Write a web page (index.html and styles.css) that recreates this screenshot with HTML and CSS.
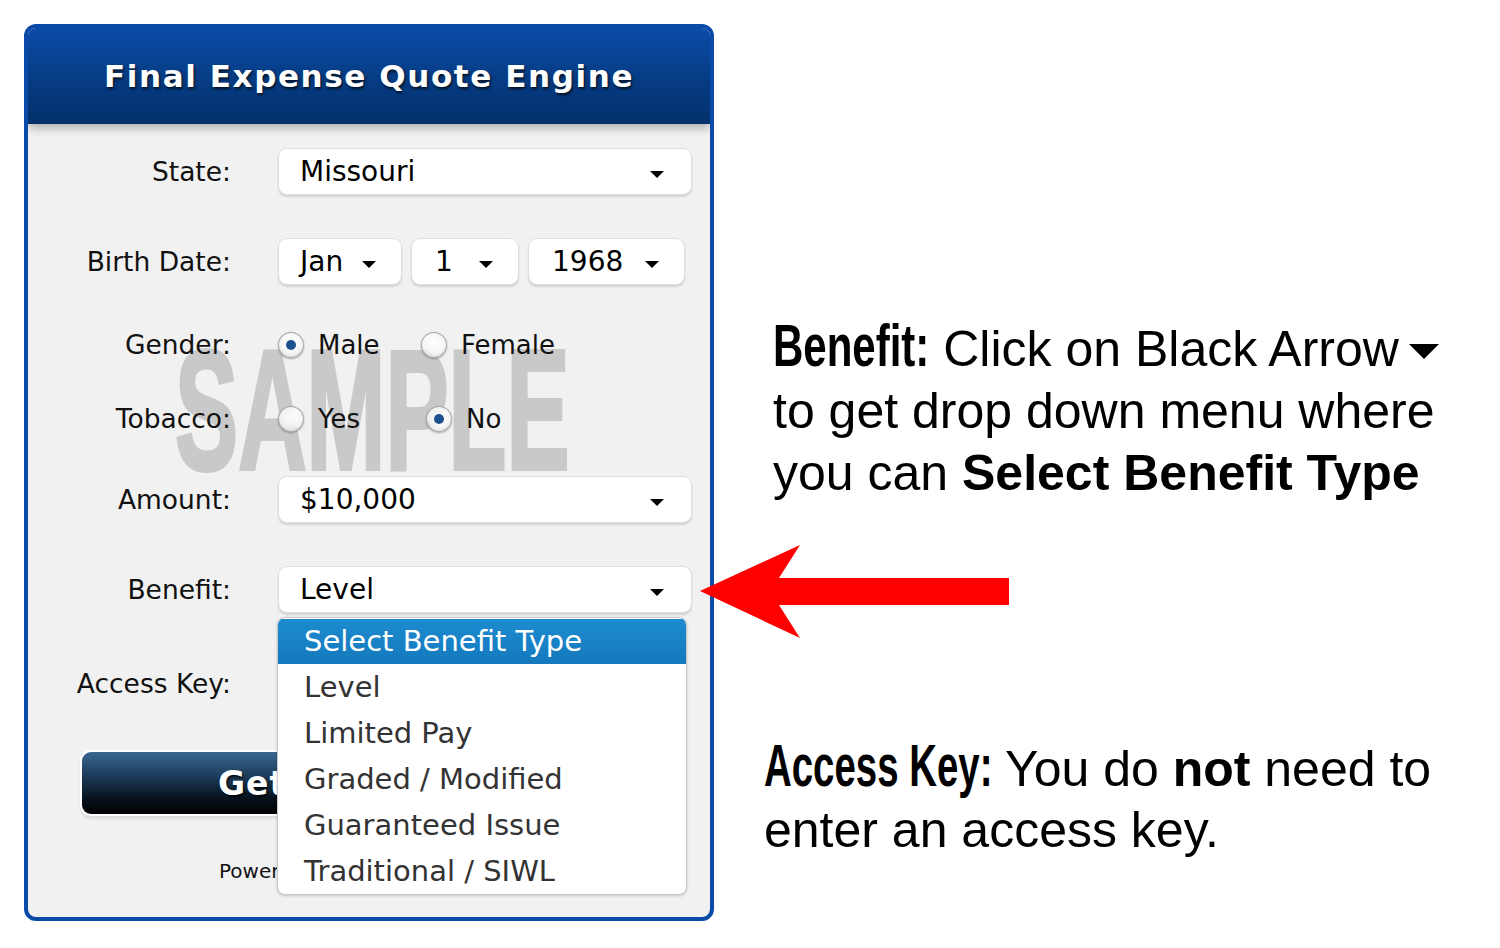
FILE: index.html
```html
<!DOCTYPE html>
<html lang="en">
<head>
<meta charset="utf-8">
<title>Final Expense Quote Engine</title>
<link rel="stylesheet" href="styles.css">
</head>
<body>
<div class="page">
  <div class="panel">
    <div class="panel-head"><h1 class="title">Final Expense Quote Engine</h1></div>
    <div class="panel-body">
      <div class="watermark">SAMPLE</div>

      <div class="row r-state">
        <div class="lbl">State:</div>
        <div class="select"><span>Missouri</span><i class="caret"></i></div>
      </div>

      <div class="row r-birth">
        <div class="lbl">Birth Date:</div>
        <div class="dates">
          <div class="select sm s-month"><span>Jan</span><i class="caret"></i></div>
          <div class="select sm s-day"><span>1</span><i class="caret"></i></div>
          <div class="select sm s-year"><span>1968</span><i class="caret"></i></div>
        </div>
      </div>

      <div class="row r-gender">
        <div class="lbl">Gender:</div>
        <div class="opts">
          <div class="opt opt-g"><span class="radio on"></span><span>Male</span></div>
          <div class="opt opt-g"><span class="radio"></span><span>Female</span></div>
        </div>
      </div>

      <div class="row r-tobacco">
        <div class="lbl">Tobacco:</div>
        <div class="opts">
          <div class="opt opt-t"><span class="radio"></span><span>Yes</span></div>
          <div class="opt opt-t"><span class="radio on"></span><span>No</span></div>
        </div>
      </div>

      <div class="row r-amount">
        <div class="lbl">Amount:</div>
        <div class="select"><span>$10,000</span><i class="caret"></i></div>
      </div>

      <div class="row r-benefit">
        <div class="lbl">Benefit:</div>
        <div class="select-wrap">
          <div class="select"><span>Level</span><i class="caret"></i></div>
          <ul class="menu">
            <li class="active">Select Benefit Type</li>
            <li>Level</li>
            <li>Limited Pay</li>
            <li>Graded / Modified</li>
            <li>Guaranteed Issue</li>
            <li>Traditional / SIWL</li>
          </ul>
        </div>
      </div>

      <div class="row r-access">
        <div class="lbl">Access Key:</div>
        <div class="input"></div>
      </div>

      <div class="btn">Get Quotes</div>

      <div class="powered">Powered by Quote Engine</div>
    </div>
  </div>

  <div class="notes">
    <p class="note n-benefit"><span class="hd hd-benefit">Benefit:</span> Click on Black Arrow<i class="tri"></i><br>to get drop down menu where<br>you can <b>Select Benefit Type</b></p>
    <p class="note n-access"><span class="hd hd-access">Access Key:</span> You do <b>not</b> need to<br>enter an access key.</p>
  </div>

  <svg class="red-arrow" width="310" height="94" viewBox="0 0 310 94" aria-hidden="true">
    <polygon points="0,46 100,0 79,33 309,33 309,60 79,60 100,93" fill="#ff0000"/>
  </svg>
</div>
</body>
</html>
```

FILE: styles.css
```css
html, body {
  margin: 0;
  padding: 0;
  background: #ffffff;
}

.page {
  position: relative;
  display: flex;
  align-items: flex-start;
  padding: 24px 0 0 24px;
  height: 924px;
}

/* ---------- panel ---------- */
.panel {
  width: 682px;
  border: 4px solid #0a4aa8;
  border-radius: 12px;
  overflow: hidden;
  background: #f1f1f1;
  font-family: "DejaVu Sans", Verdana, sans-serif;
  color: #111;
}

.panel-head {
  position: relative;
  z-index: 3;
  height: 96px;
  display: flex;
  align-items: center;
  justify-content: center;
  background: linear-gradient(#0b4ca8, #063d86 50%, #03306a);
  box-shadow: 0 4px 9px rgba(0, 0, 0, 0.28);
}

.title {
  margin: 0;
  font-size: 31px;
  font-weight: 700;
  letter-spacing: 1.6px;
  color: #ffffff;
  text-shadow: 1px 2px 3px rgba(0, 0, 0, 0.75);
}

.panel-body {
  position: relative;
  height: 769px;
  padding-top: 24px;
  display: flex;
  flex-direction: column;
}

.watermark {
  position: absolute;
  left: 147px;
  top: 201px;
  z-index: 0;
  font-family: "Liberation Sans", Arial, sans-serif;
  font-weight: 700;
  font-size: 170px;
  line-height: 1;
  color: #c9c9c9;
  -webkit-text-stroke: 4px #c9c9c9;
  transform: scaleX(0.557);
  transform-origin: 0 0;
  white-space: nowrap;
}

.row {
  position: relative;
  z-index: 1;
  display: grid;
  grid-template-columns: 203px 1fr;
  column-gap: 47px;
  align-items: center;
  height: 47px;
  padding-right: 18px;
}

.lbl {
  text-align: right;
  font-size: 26.5px;
  color: #111;
  white-space: nowrap;
}

.r-birth { margin-top: 43px; }
.r-gender { margin-top: 36px; }
.r-tobacco { margin-top: 27px; }
.r-amount { margin-top: 34px; }
.r-benefit { margin-top: 43px; z-index: 2; }
.r-access { margin-top: 47px; }

/* ---------- selects ---------- */
.select {
  box-sizing: border-box;
  height: 47px;
  display: flex;
  align-items: center;
  justify-content: space-between;
  padding: 0 27px 0 21px;
  background: #ffffff;
  border: 1px solid #dedede;
  border-radius: 9px;
  box-shadow: 0 2px 2px rgba(0, 0, 0, 0.13);
  font-size: 28px;
  color: #000;
  white-space: nowrap;
}

.caret {
  display: block;
  width: 0;
  height: 0;
  margin-top: 6px;
  border-left: 7.5px solid transparent;
  border-right: 7.5px solid transparent;
  border-top: 7px solid #000;
}

.dates {
  display: flex;
  gap: 9px;
}

.select.sm { padding-right: 25px; }
.s-month { width: 124px; }
.s-day { width: 108px; padding-left: 23px; }
.s-year { width: 157px; padding-left: 23px; }

/* ---------- radios ---------- */
.opts {
  display: flex;
  align-items: center;
}

.opt {
  display: flex;
  align-items: center;
  gap: 14px;
  font-size: 26px;
  color: #111;
}

.opt-g { width: 143px; }
.opt-t { width: 148px; }

.radio {
  position: relative;
  box-sizing: border-box;
  width: 26px;
  height: 26px;
  border-radius: 50%;
  border: 1px solid rgba(150, 150, 150, 0.8);
  background: radial-gradient(circle at 50% 40%, rgba(255,255,255,0.95) 0%, rgba(246,246,246,0.85) 55%, rgba(205,205,205,0.8) 100%);
  box-shadow: 0 1px 2px rgba(0, 0, 0, 0.3);
}

.radio.on::after {
  content: "";
  position: absolute;
  left: 7px;
  top: 7px;
  width: 10px;
  height: 10px;
  border-radius: 50%;
  background: #1d508e;
}

/* ---------- dropdown menu ---------- */
.select-wrap {
  position: relative;
}

.menu {
  position: absolute;
  left: -1px;
  top: 51px;
  z-index: 5;
  box-sizing: border-box;
  width: 410px;
  margin: 0;
  padding: 1px 0 0;
  list-style: none;
  background: #ffffff;
  border: 1px solid #c9c9c9;
  border-radius: 8px;
  box-shadow: 0 1px 3px rgba(0, 0, 0, 0.18);
  overflow: hidden;
}

.menu li {
  height: 46px;
  line-height: 46px;
  padding-left: 26px;
  font-size: 29px;
  color: #333;
  white-space: nowrap;
}

.menu li.active {
  height: 45px;
  line-height: 45px;
  background: linear-gradient(#1d8bd0, #1579bd);
  color: #ffffff;
}

.input {
  box-sizing: border-box;
  width: 370px;
  height: 47px;
  background: #ffffff;
  border: 1px solid #dedede;
  border-radius: 9px;
}

/* ---------- button ---------- */
.btn {
  position: relative;
  z-index: 1;
  box-sizing: border-box;
  width: 574px;
  height: 62px;
  margin: 45px 0 0 54px;
  padding-left: 136px;
  display: flex;
  align-items: center;
  border-radius: 9px;
  background: linear-gradient(#3a6790, #1c3a58 40%, #07121d 75%, #000 100%);
  box-shadow: 0 0 0 2px #ffffff, 0 3px 2px 2px #dcdcdc;
  font-size: 33px;
  font-weight: 700;
  letter-spacing: 1px;
  color: #ffffff;
  text-shadow: 1px 2px 2px rgba(0, 0, 0, 0.8);
}

.powered {
  position: relative;
  z-index: 1;
  margin-top: 45px;
  padding-left: 191px;
  font-size: 20px;
  line-height: 24px;
  color: #111;
  white-space: nowrap;
}

/* ---------- notes ---------- */
.notes {
  display: flex;
  flex-direction: column;
  margin-left: 59px;
  font-family: "Liberation Sans", Arial, Helvetica, sans-serif;
  color: #000;
}

.note {
  margin: 0;
  font-size: 50px;
  white-space: nowrap;
}

.n-benefit {
  margin-top: 294px;
  line-height: 62px;
}

.n-access {
  margin-top: 235px;
  margin-left: -9px;
  line-height: 61px;
}

.hd {
  display: inline-block;
  font-size: 60px;
  font-weight: 700;
  line-height: 50px;
  transform-origin: 0 50%;
}

.hd-benefit {
  transform: scaleX(0.70);
  margin-right: -67px;
}

.hd-access {
  transform: scaleX(0.64);
  margin-right: -129px;
}

.tri {
  display: inline-block;
  width: 0;
  height: 0;
  margin-left: 10px;
  vertical-align: 7px;
  border-left: 15px solid transparent;
  border-right: 15px solid transparent;
  border-top: 15px solid #000;
}

.red-arrow {
  position: absolute;
  left: 700px;
  top: 545px;
  z-index: 10;
}
```
